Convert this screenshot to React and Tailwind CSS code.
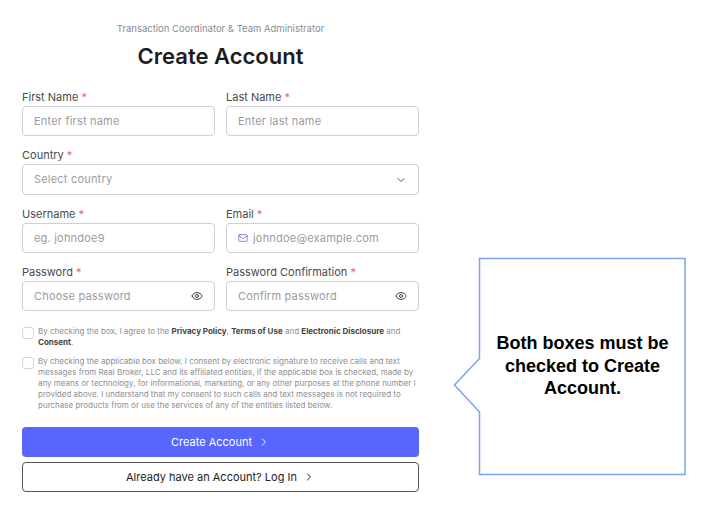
import { ChevronDown, ChevronRight, Eye, Mail } from "lucide-react";

function Label(props) {
    return (
        <label className="block text-[11px] leading-[14px] mb-[2px] text-[#4a4a4f]">
            {props.text} <span className="text-[#f0616d]">*</span>
        </label>
    );
}

function Field(props) {
    return (
        <div className="flex-1 min-w-0">
            <Label text={props.label} />
            <div className="flex items-center h-[30px] px-[11px] rounded-[4px] border border-[#cfcfd4] bg-white text-[11px] text-[#9b9ba1] tracking-[0.2px]">
                {props.icon && <Mail className="w-[10px] h-[10px] mr-[5px] text-[#6f74e8]" />}
                <span className="flex-1">{props.placeholder}</span>
                {props.eye && <Eye className="w-[12px] h-[12px] text-[#444]" />}
            </div>
        </div>
    );
}

function Checkbox() {
    return <div className="w-[12px] h-[12px] mt-[1px] shrink-0 rounded-[3px] border border-[#d4d4d8] bg-white" />;
}

export default function App() {
    return (
        <div className="relative w-[727px] h-[509px] bg-white overflow-hidden font-['Inter',sans-serif]">
            <div className="w-[397px] ml-[22px] pt-[22px]">
                <p className="text-center text-[9.5px] leading-[13px] text-[#8b8b93]">
                    Transaction Coordinator &amp; Team Administrator
                </p>
                <h1 className="text-center text-[22px] leading-[28px] mt-[7px] font-semibold text-[#1c1c1e]">
                    Create Account
                </h1>

                <div className="flex flex-col gap-[12px] mt-[20px]">
                    <div className="flex gap-[11px]">
                        <Field label="First Name" placeholder="Enter first name" />
                        <Field label="Last Name" placeholder="Enter last name" />
                    </div>
                    <div>
                        <Label text="Country" />
                        <div className="flex items-center justify-between h-[31px] px-[11px] rounded-[4px] border border-[#cfcfd4] text-[11px] text-[#9b9ba1] tracking-[0.2px]">
                            Select country
                            <ChevronDown className="w-[12px] h-[12px] text-[#555]" />
                        </div>
                    </div>
                    <div className="flex gap-[11px]">
                        <Field label="Username" placeholder="eg. johndoe9" />
                        <Field label="Email" placeholder="johndoe@example.com" icon />
                    </div>
                    <div className="flex gap-[11px]">
                        <Field label="Password" placeholder="Choose password" eye />
                        <Field label="Password Confirmation" placeholder="Confirm password" eye />
                    </div>
                </div>

                <div className="flex gap-[4px] mt-[15px] text-[8px] leading-[11px] text-[#8e8e94]">
                    <Checkbox />
                    <p>
                        By checking the box, I agree to the <b className="text-[#444]">Privacy Policy</b>,{" "}
                        <b className="text-[#444]">Terms of Use</b> and <b className="text-[#444]">Electronic Disclosure</b> and{" "}
                        <b className="text-[#444]">Consent</b>.
                    </p>
                </div>
                <div className="flex gap-[4px] mt-[8px] text-[8px] leading-[11px] text-[#8e8e94]">
                    <Checkbox />
                    <p>
                        By checking the applicable box below, I consent by electronic signature to receive calls and text messages from Real Broker, LLC and its affiliated entities, if the applicable box is checked, made by any means or technology, for informational, marketing, or any other purposes at the phone number I provided above. I understand that my consent to such calls and text messages is not required to purchase products from or use the services of any of the entities listed below.
                    </p>
                </div>

                <button className="flex items-center justify-center gap-[6px] w-full h-[30px] mt-[16px] rounded-[4px] bg-[#5767fd] text-[11px] text-white">
                    Create Account
                    <ChevronRight className="w-[12px] h-[12px]" />
                </button>
                <button className="flex items-center justify-center gap-[6px] w-full h-[30px] mt-[5px] rounded-[4px] border border-[#555] bg-white text-[11px] text-[#222]">
                    Already have an Account? Log In
                    <ChevronRight className="w-[12px] h-[12px]" />
                </button>
            </div>

            {/* callout over the page */}
            <div className="absolute left-[453px] top-[257px] w-[234px] h-[220px]">
                <svg className="absolute inset-0" width="234" height="220" fill="none">
                    <path d="M26.5 1.5H232V217.5H26.5V155L1.5 128L26.5 101.5Z" fill="#fff" stroke="#7ba3f0" strokeWidth="1.5" />
                </svg>
                <p className="absolute left-[27px] right-[2px] top-[75px] px-[8px] text-center text-[18px] leading-[22.5px] font-bold text-black font-['Liberation_Sans',sans-serif]">
                    Both boxes must be checked to Create Account.
                </p>
            </div>
        </div>
    );
}
